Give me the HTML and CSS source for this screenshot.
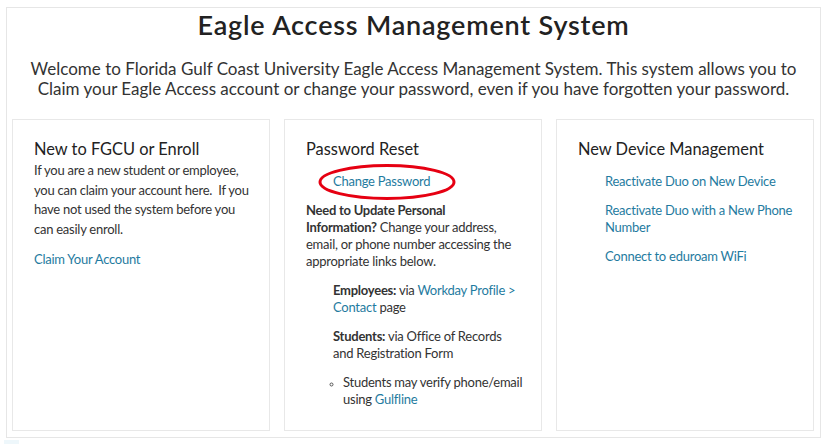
FILE: index.html
```html
<!DOCTYPE html>
<html lang="en">
<head>
<meta charset="utf-8">
<title>Eagle Access Management System</title>
<link rel="stylesheet" href="styles.css">
</head>
<body>
<div class="page">
  <h1 class="title">Eagle Access Management System</h1>
  <p class="intro">Welcome to Florida Gulf Coast University Eagle Access Management System. This system allows you to Claim your Eagle Access account or change your password, even if you have forgotten your password.</p>
  <div class="cards">
    <section class="card">
      <h2 class="card-title">New to FGCU or Enroll</h2>
      <p class="card-text">If you are a new student or employee, you can claim your account here.&nbsp; If you have not used the system before you can easily enroll.</p>
      <p class="card-link"><a href="#">Claim Your Account</a></p>
    </section>
    <section class="card">
      <h2 class="card-title">Password Reset</h2>
      <p class="indent circled"><a href="#">Change Password</a>
        <svg class="ellipse" width="140" height="38" viewBox="0 0 140 38" aria-hidden="true"><ellipse cx="70" cy="19" rx="67" ry="16.5" fill="none" stroke="#e60012" stroke-width="3"/></svg>
      </p>
      <p class="dense update"><b>Need to Update Personal<br>Information?</b> Change your address, email, or phone number accessing the appropriate links below.</p>
      <p class="dense indent"><b>Employees:</b> via <a href="#">Workday Profile &gt; Contact</a> page</p>
      <p class="dense indent"><b>Students:</b> via Office of Records and Registration Form</p>
      <ul class="bullets">
        <li>Students may verify phone/email using <a href="#">Gulfline</a></li>
      </ul>
    </section>
    <section class="card">
      <h2 class="card-title">New Device Management</h2>
      <p class="dense indent first"><a href="#">Reactivate Duo on New Device</a></p>
      <p class="dense indent"><a href="#">Reactivate Duo with a New Phone Number</a></p>
      <p class="dense indent"><a href="#">Connect to eduroam WiFi</a></p>
    </section>
  </div>
</div>
<div class="edge"></div>
</body>
</html>
```
FILE: styles.css
```css
* { box-sizing: border-box; }
html, body { margin: 0; padding: 0; background: #fff; }
body {
  font-family: Lato, "Open Sans", Arial, sans-serif;
  color: #333;
  width: 826px;
  height: 444px;
  overflow: hidden;
}
a { color: #1f7ba0; text-decoration: none; }
b { font-weight: 700; }
.page {
  margin: 7px 0 0 6px;
  width: 815px;
  height: 431px;
  border: 1px solid #e6e6e6;
  padding: 0 5px;
}
.title {
  margin: 0;
  font-size: 27px;
  font-weight: 600;
  letter-spacing: 0.8px;
  line-height: 34px;
  text-align: center;
  color: #222;
}
.intro {
  margin: 17px 0 0;
  font-size: 17px;
  line-height: 20px;
  text-align: center;
  color: #333;
}
.cards {
  display: grid;
  grid-template-columns: repeat(3, 258px);
  column-gap: 14px;
  margin-top: 20px;
}
.card {
  height: 312px;
  border: 1px solid #e8e8e8;
  padding: 19px 18px 0 21px;
  font-size: 13px;
  letter-spacing: -0.25px;
}
.card-title {
  margin: 0;
  font-size: 16.4px;
  font-weight: 400;
  letter-spacing: 0;
  line-height: 20px;
  color: #222;
}
.card-text {
  margin: 2px 0 0;
  line-height: 19.5px;
}
.card-link { margin: 11px 0 0; line-height: 19.5px; }
.indent { padding-left: 27px; }
.circled {
  position: relative;
  margin: 14px 0 0;
  line-height: 17px;
}
.ellipse {
  position: absolute;
  left: 11px;
  top: -10px;
}
.dense {
  margin: 12px 0 0;
  line-height: 17px;
}
.first { margin-top: 14px; }
.bullets {
  margin: 12px 0 0;
  padding-left: 37px;
  line-height: 17px;
  list-style: circle;
}
.bullets li::marker { font-size: 10px; color: #555; }
.edge {
  margin: 2px 0 0 4px;
  width: 15px;
  height: 4px;
  background: #eef7fb;
}
```
